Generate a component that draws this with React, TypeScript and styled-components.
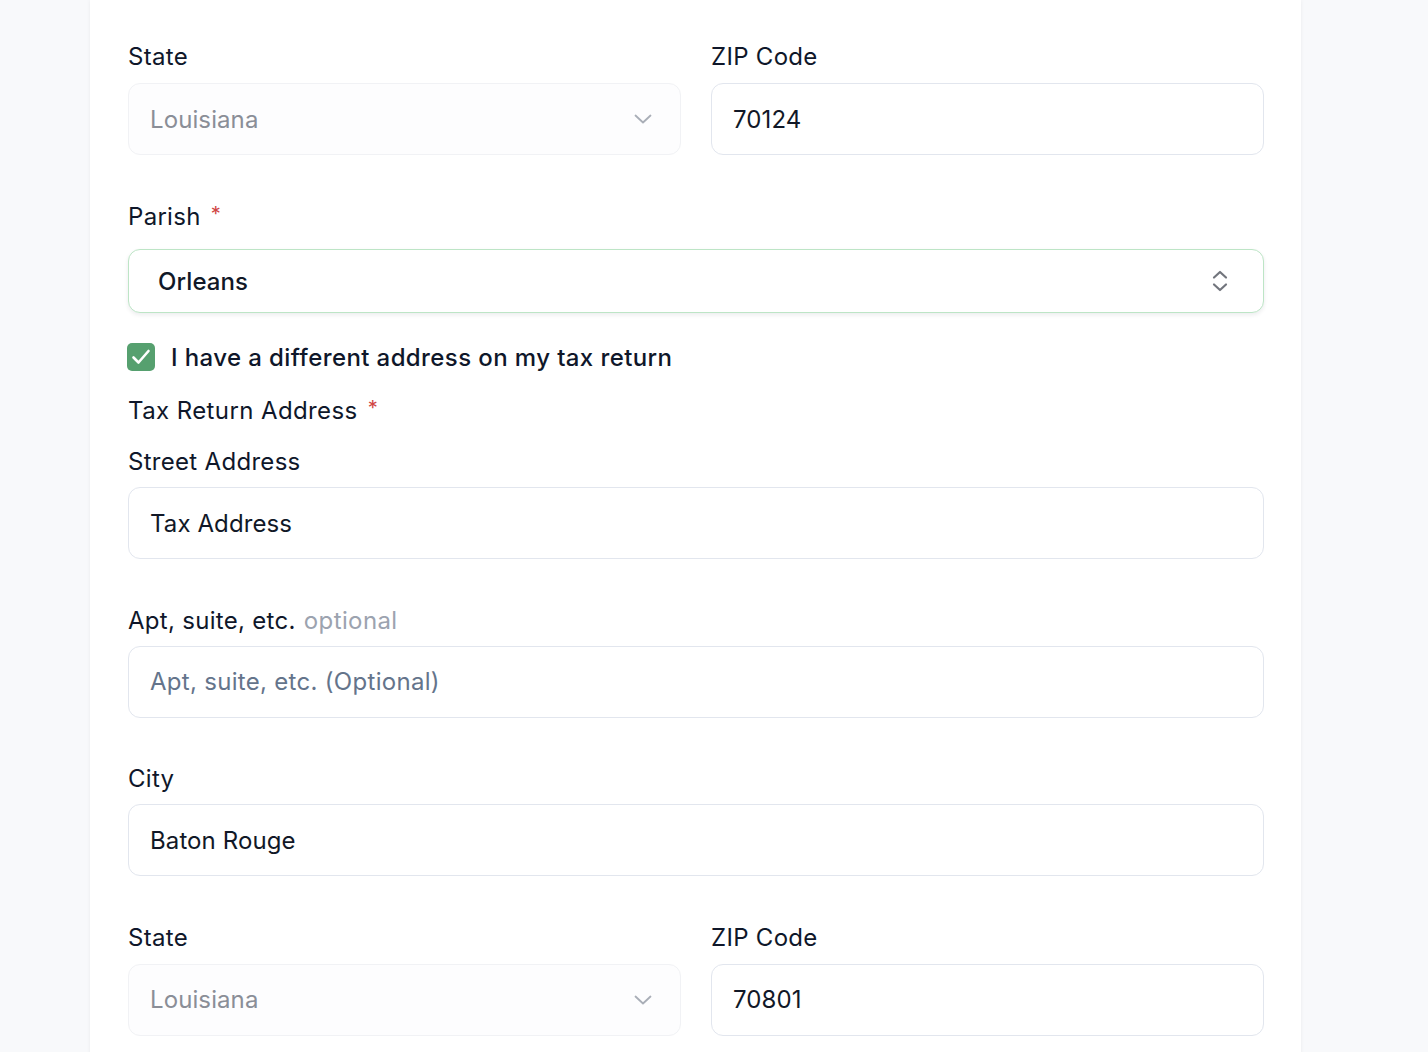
import styled, { createGlobalStyle } from "styled-components";

const GlobalStyle = createGlobalStyle`
  html, body {
    margin: 0;
    padding: 0;
    background: #f8f9fb;
    font-family: "Inter", "Noto Sans", sans-serif;
    color: #0f172a;
  }
  * {
    box-sizing: border-box;
  }
`;

const Page = styled.div`
  height: 1052px;
  overflow: hidden;
`;

const Card = styled.div`
  margin-left: 90px;
  width: 1211px;
  min-height: 1052px;
  background: #ffffff;
  box-shadow: 0 0 4px rgba(15, 23, 42, 0.06);
  padding: 39px 37px 40px 38px;
  display: flex;
  flex-direction: column;
`;

const Row = styled.div<{ $mt?: number }>`
  display: grid;
  grid-template-columns: 1fr 1fr;
  column-gap: 30px;
  margin-top: ${(p) => p.$mt ?? 0}px;
`;

const Field = styled.div<{ $mt?: number }>`
  display: flex;
  flex-direction: column;
  margin-top: ${(p) => p.$mt ?? 0}px;
`;

const Label = styled.label<{ $mb?: number }>`
  font-size: 24px;
  line-height: 36px;
  height: 36px;
  font-weight: 400;
  letter-spacing: 0.3px;
  color: #0f172a;
  margin-bottom: ${(p) => p.$mb ?? 8}px;
`;

const Required = styled.span`
  color: #d04545;
  margin-left: 10px;
  font-size: 20px;
  line-height: 0;
  vertical-align: 4px;
`;

const Optional = styled.span`
  color: #9ca3af;
  margin-left: 8px;
  letter-spacing: 0.4px;
`;

const Input = styled.div<{ $disabled?: boolean; $placeholder?: boolean }>`
  height: 72px;
  border-radius: 12px;
  border: 1.5px solid ${(p) => (p.$disabled ? "#f1f2f5" : "#e2e6ee")};
  background: ${(p) => (p.$disabled ? "#fdfdfe" : "#ffffff")};
  padding: 0 28px 0 21px;
  display: flex;
  align-items: center;
  justify-content: space-between;
  font-size: 24px;
  letter-spacing: ${(p) => (p.$placeholder ? "0.3px" : "0.1px")};
  color: ${(p) =>
    p.$disabled ? "#8a8e97" : p.$placeholder ? "#64748b" : "#111827"};
`;

const Select = styled.div`
  height: 64px;
  border-radius: 12px;
  border: 1.5px solid #bde5c6;
  background: #ffffff;
  box-shadow: 0 2px 4px rgba(15, 23, 42, 0.08);
  padding: 0 34px 0 29px;
  display: flex;
  align-items: center;
  justify-content: space-between;
  font-size: 24px;
  font-weight: 500;
  letter-spacing: 0.1px;
  color: #111827;
`;

const CheckRow = styled.div`
  display: flex;
  align-items: center;
  gap: 16px;
  margin-top: 26px;
  height: 36px;
  font-size: 24px;
  font-weight: 500;
  letter-spacing: 0.4px;
  color: #0f172a;
`;

const Box = styled.span`
  width: 28px;
  height: 28px;
  border-radius: 5px;
  background: #56a06f;
  display: flex;
  align-items: center;
  justify-content: center;
  margin-left: -1px;
`;

const SectionTitle = styled.div`
  font-size: 24px;
  line-height: 36px;
  height: 36px;
  letter-spacing: 0.4px;
  color: #0f172a;
  margin-top: 18px;
`;

const ChevronDown = () => (
  <svg width="18" height="10" viewBox="0 0 18 10" fill="none">
    <path
      d="M1.5 1.5 9 8.5l7.5-7"
      stroke="#a9aeb7"
      strokeWidth="1.8"
      strokeLinecap="round"
      strokeLinejoin="round"
    />
  </svg>
);

const ChevronsUpDown = () => (
  <svg width="18" height="24" viewBox="0 0 18 24" fill="none">
    <path
      d="M3 8.5 9 3l6 5.5M3 15.5 9 21l6-5.5"
      stroke="#72757d"
      strokeWidth="2.2"
      strokeLinecap="round"
      strokeLinejoin="round"
    />
  </svg>
);

const Check = () => (
  <svg width="22" height="22" viewBox="0 0 22 22" fill="none">
    <path
      d="M3.5 11.5 8.5 16.5 18.5 5"
      stroke="#ffffff"
      strokeWidth="2.6"
      strokeLinecap="round"
      strokeLinejoin="round"
    />
  </svg>
);

const StateZip = ({ zip, mt }: { zip: string; mt?: number }) => (
  <Row $mt={mt}>
    <Field>
      <Label>State</Label>
      <Input $disabled>
        Louisiana
        <ChevronDown />
      </Input>
    </Field>
    <Field>
      <Label>ZIP Code</Label>
      <Input>{zip}</Input>
    </Field>
  </Row>
);

const App = () => {
  return (
    <Page>
      <GlobalStyle />
      <Card>
        <StateZip zip="70124" />

        <Field $mt={44}>
          <Label $mb={14}>
            Parish<Required>*</Required>
          </Label>
          <Select>
            Orleans
            <ChevronsUpDown />
          </Select>
        </Field>

        <CheckRow>
          <Box>
            <Check />
          </Box>
          I have a different address on my tax return
        </CheckRow>

        <SectionTitle>
          Tax Return Address<Required>*</Required>
        </SectionTitle>

        <Field $mt={15}>
          <Label $mb={7}>Street Address</Label>
          <Input>Tax Address</Input>
        </Field>

        <Field $mt={43.5}>
          <Label $mb={7}>
            Apt, suite, etc.<Optional>optional</Optional>
          </Label>
          <Input $placeholder>Apt, suite, etc. (Optional)</Input>
        </Field>

        <Field $mt={43.5}>
          <Label $mb={7}>City</Label>
          <Input>Baton Rouge</Input>
        </Field>

        <StateZip zip="70801" mt={43.5} />
      </Card>
    </Page>
  );
};

export default App;
